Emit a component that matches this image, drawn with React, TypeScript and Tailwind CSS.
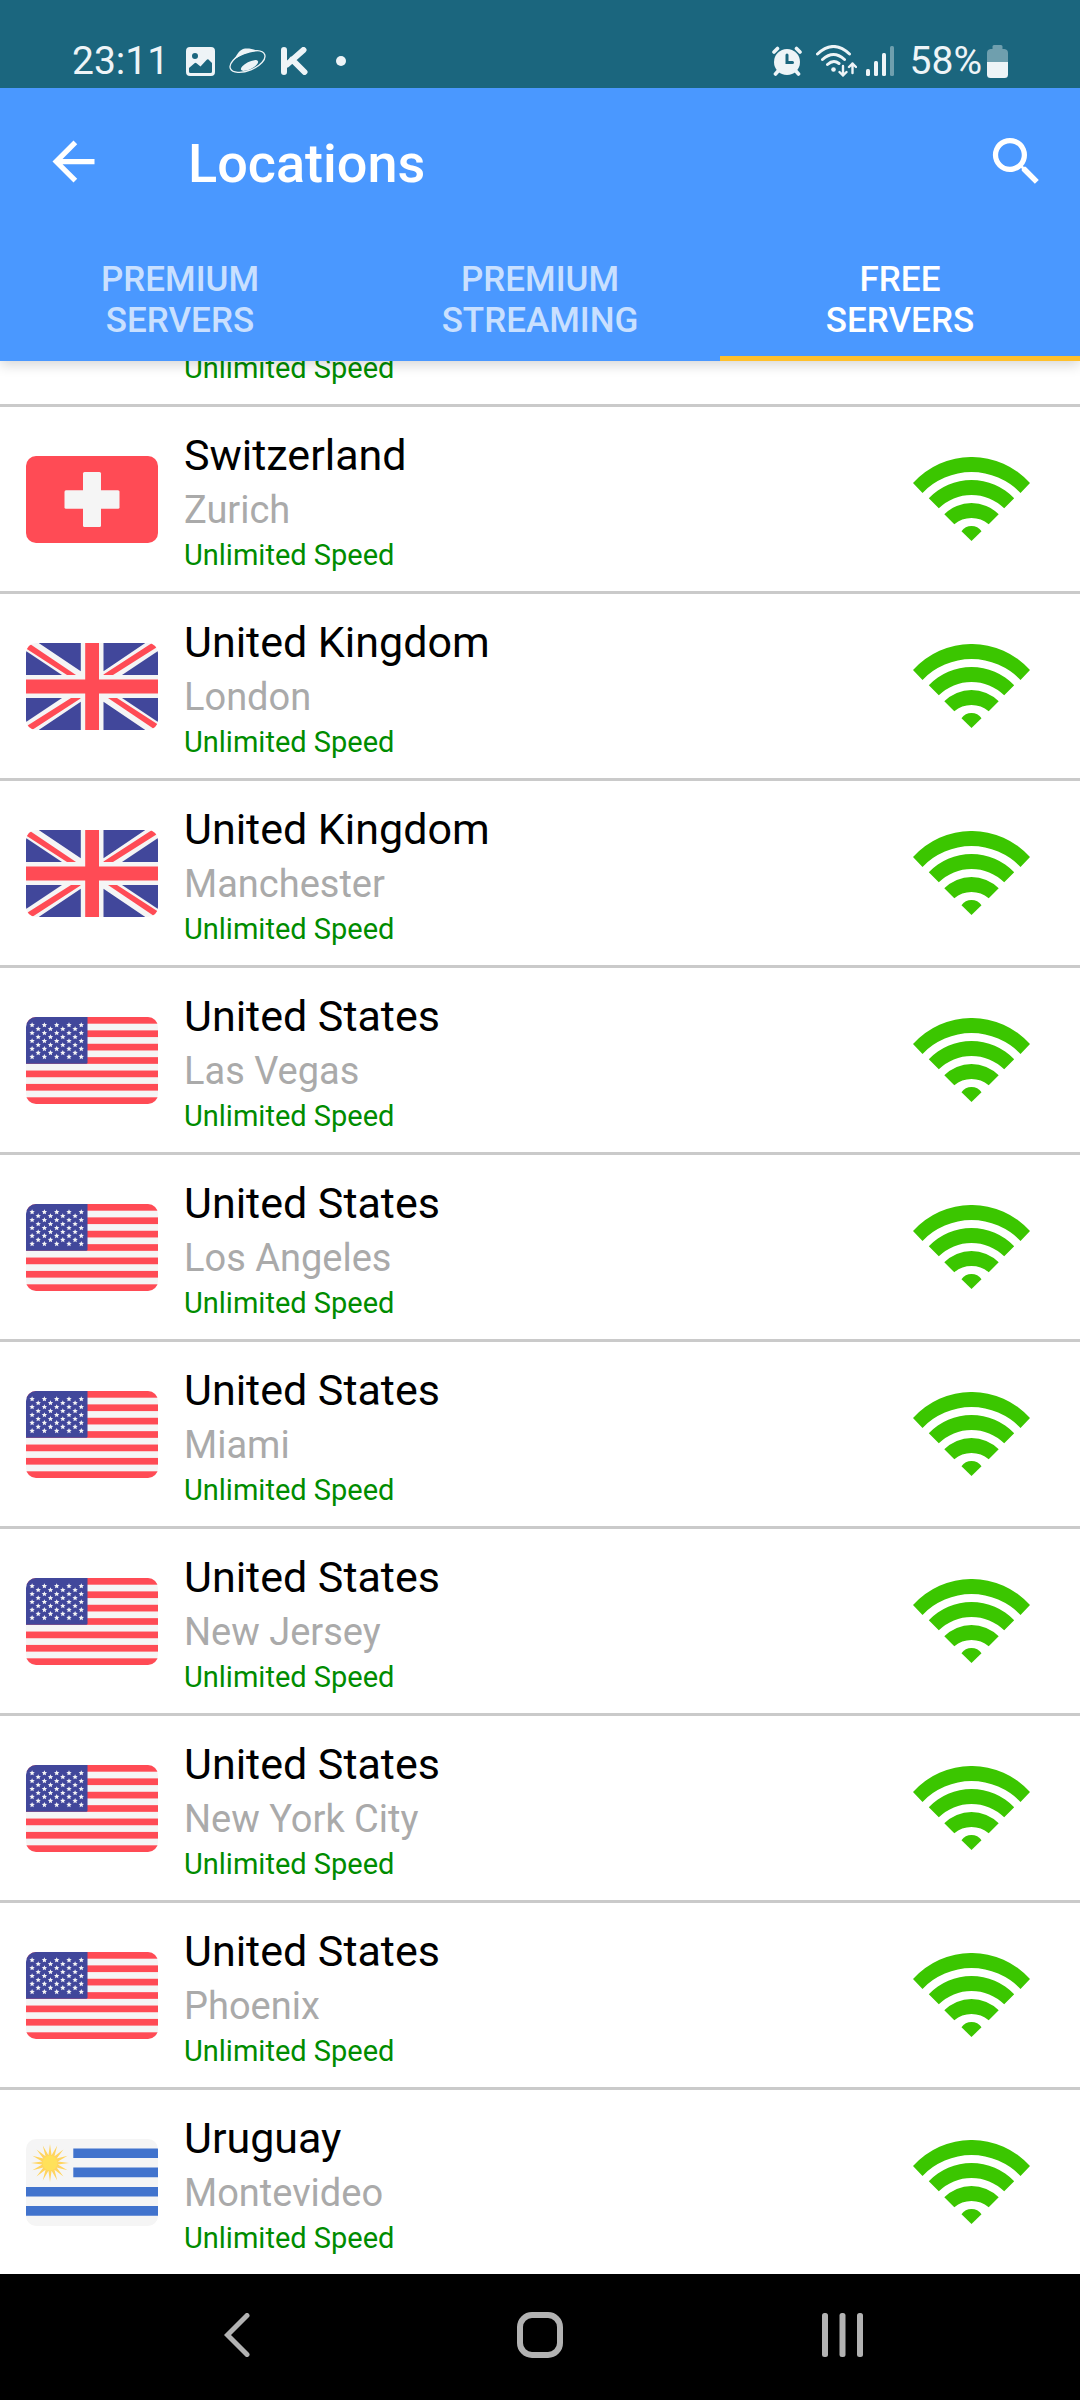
import React from "react";

type Country = "ch" | "gb" | "us" | "uy";

const servers: { country: Country; name: string; city: string }[] = [
  { country: "ch", name: "Switzerland", city: "Zurich" },
  { country: "gb", name: "United Kingdom", city: "London" },
  { country: "gb", name: "United Kingdom", city: "Manchester" },
  { country: "us", name: "United States", city: "Las Vegas" },
  { country: "us", name: "United States", city: "Los Angeles" },
  { country: "us", name: "United States", city: "Miami" },
  { country: "us", name: "United States", city: "New Jersey" },
  { country: "us", name: "United States", city: "New York City" },
  { country: "us", name: "United States", city: "Phoenix" },
  { country: "uy", name: "Uruguay", city: "Montevideo" },
];

const tabs = [
  { lines: ["PREMIUM", "SERVERS"], active: false },
  { lines: ["PREMIUM", "STREAMING"], active: false },
  { lines: ["FREE", "SERVERS"], active: true },
];

function starPoints(cx: number, cy: number, spikes: number, outer: number, inner: number) {
  return Array.from({ length: spikes * 2 }, (_, i) => {
    const r = i % 2 === 0 ? outer : inner;
    const a = (Math.PI * i) / spikes - Math.PI / 2;
    return `${(cx + r * Math.cos(a)).toFixed(2)},${(cy + r * Math.sin(a)).toFixed(2)}`;
  }).join(" ");
}

function SwissFlag() {
  return (
    <>
      <rect width="132" height="87" fill="#ff4b55" />
      <rect x="57" y="16" width="18" height="55" rx="1.5" fill="#f5f5f5" />
      <rect x="38.5" y="34.3" width="55" height="18.4" rx="1.5" fill="#f5f5f5" />
    </>
  );
}

function BritishFlag() {
  return (
    <>
      <rect width="132" height="87" fill="#f5f5f5" />
      <path
        fill="#41479b"
        d="M12.7 0H54.8V28.3ZM0 8L36 32H0ZM77.5 0H119.3L77.5 28.3ZM132 8V32H96ZM0 55H36L0 79ZM54.8 58.7V87H12.7ZM77.5 58.7L119.3 87H77.5ZM96 55H132V79Z"
      />
      <path
        fill="#ff4b55"
        d="M2.5 0L50 32H41L0 5.5V2ZM77.5 32H87L132 3.5V2L126 0L77.5 31.5ZM54.5 55H45L0 83.5V85L6 87L54.5 55.5ZM129.5 87L82 55H91L132 81.5V85Z"
      />
      <path fill="#ff4b55" d="M59.2 0H73V36.5H132V50.5H73V87H59.2V50.5H0V36.5H59.2Z" />
    </>
  );
}

function AmericanFlag() {
  const stripe = 87 / 13;
  const stars: [number, number][] = [];
  for (let row = 0; row < 9; row++) {
    const count = row % 2 === 0 ? 5 : 4;
    for (let col = 0; col < count; col++) {
      stars.push([(row % 2 === 0 ? 6.1 : 12.2) + col * 12.3, 8.1 + row * 3.97]);
    }
  }
  return (
    <>
      <rect width="132" height="87" fill="#f5f5f5" />
      {Array.from({ length: 7 }, (_, i) => (
        <rect key={i} y={i * 2 * stripe} width="132" height={stripe} fill="#ff4b55" />
      ))}
      <path d="M0 0H61.5V45.5Q61.5 46.8 60.2 46.8H0Z" fill="#41479b" />
      {stars.map(([x, y]) => (
        <polygon key={`${x}-${y}`} points={starPoints(x, y, 5, 2.8, 1.3)} fill="#f5f5f5" />
      ))}
    </>
  );
}

function UruguayanFlag() {
  return (
    <>
      <rect width="132" height="87" fill="#f5f5f5" />
      <path fill="#4173cd" d="M47.3 9.4H132V19H47.3ZM47.3 28.6H132V38.2H47.3ZM0 47.9H132V57.5H0ZM0 67.1H132V76.7H0Z" />
      <polygon points={starPoints(24, 24, 16, 19, 8)} fill="#ffd45f" />
      <circle cx="24" cy="24" r="7.5" fill="#ffe15a" />
    </>
  );
}

function Flag({ country }: { country: Country }) {
  return (
    <svg viewBox="0 0 132 87" className="h-[87px] w-[132px] shrink-0 rounded-[10px]" aria-hidden="true">
      {country === "ch" && <SwissFlag />}
      {country === "gb" && <BritishFlag />}
      {country === "us" && <AmericanFlag />}
      {country === "uy" && <UruguayanFlag />}
    </svg>
  );
}

function SignalIcon() {
  return (
    <svg viewBox="0 0 117 84" className="h-[84px] w-[117px] shrink-0" fill="#3bc600" role="img" aria-label="Strong signal">
      <path d="M0 26A78.8 78.8 0 0 1 117 26L107.5 36A67.7 67.7 0 0 0 9.5 36Z" />
      <path d="M15.8 41.3A59 59 0 0 1 101.2 41.3L91.2 51.3A46.8 46.8 0 0 0 25.8 51.3Z" />
      <path d="M31.3 57.3A38.4 38.4 0 0 1 85.7 57.3L75.7 67.3A26.7 26.7 0 0 0 41.3 67.3Z" />
      <path d="M48.5 74.3A12 12 0 0 1 68.5 74.3L58.5 84Z" />
    </svg>
  );
}

function StatusBar() {
  return (
    <div className="flex h-[88px] items-end justify-between bg-[#1b667e] pr-[72px] pb-1 pl-[72px] text-[39px] leading-[46px] text-[#eef4f7]">
      <div className="flex items-center">
        <span>23:11</span>
        <svg viewBox="0 0 29 29" className="ml-[17px] size-[29px]" aria-hidden="true">
          <path
            fill="currentColor"
            fillRule="evenodd"
            d="M4 0H25Q29 0 29 4V25Q29 29 25 29H4Q0 29 0 25V4Q0 0 4 0ZM9 6A3 3 0 1 0 9 12A3 3 0 1 0 9 6ZM3 21V24.500Q3 26 4.500 26H24.500Q26 26 26 24.500V16L22.500 12.500Q21.500 12 20.500 13L14.500 19.500L10.500 16.200Q9.500 15.500 8.500 16.200Z"
          />
        </svg>
        <svg viewBox="0 0 37 26" className="ml-[14px] h-[26px] w-[37px]" aria-hidden="true">
          <path fill="currentColor" d="M4 12C8 8 9 3 14 1C19 0 24 1 29 3C20 4 12 7 4 12Z" />
          <ellipse cx="18.500" cy="13.500" rx="18.500" ry="9" transform="rotate(-22 18.500 13.500)" fill="none" stroke="currentColor" strokeWidth="1.300" />
          <ellipse cx="20.500" cy="17.500" rx="9.500" ry="3.600" transform="rotate(-27 20.500 17.500)" fill="currentColor" />
        </svg>
        <svg viewBox="0 0 27 28" className="ml-[15px] h-[28px] w-[27px]" fill="none" stroke="currentColor" strokeWidth="6" strokeLinecap="round" aria-hidden="true">
          <path d="M3 3V25M22.500 3L6 17.500M11 12.500L23.500 25" />
        </svg>
        <span className="ml-[28px] size-[10px] rounded-full bg-[#eef4f7]" />
      </div>
      <div className="flex items-center">
        <svg viewBox="0 0 30 30" className="size-[30px]" aria-hidden="true">
          <circle cx="15" cy="16" r="13" fill="currentColor" />
          <path d="M2 6L5.500 2.500M28 6L24.500 2.500M3.500 28L7 24M26.500 28L23 24" stroke="currentColor" strokeWidth="3.600" strokeLinecap="round" />
          <path d="M15 9V16.500H20.500" fill="none" stroke="#1b667e" strokeWidth="3" strokeLinecap="round" />
        </svg>
        <svg viewBox="0 0 41 32" className="ml-[14px] h-[32px] w-[41px]" fill="none" stroke="currentColor" strokeWidth="3" strokeLinecap="round" strokeLinejoin="round" aria-hidden="true">
          <path d="M1.500 9Q17.500 -6 33.500 9M6.500 14.500Q17.500 4.500 28.500 14.500M11.500 19.500Q17.500 14 23 18.500" />
          <circle cx="17.500" cy="24.500" r="2.300" fill="currentColor" stroke="none" />
          <path d="M27 21V30.500M23.500 27L27 30.500L30.500 27M36.500 28V18.500M33 22L36.500 18.500L40 22" strokeWidth="2.400" />
        </svg>
        <svg viewBox="0 0 28 30" className="ml-[9px] h-[30px] w-[28px]" fill="currentColor" aria-hidden="true">
          <rect y="23" width="4" height="7" rx="1.500" />
          <rect x="8" y="15" width="4" height="15" rx="1.500" />
          <rect x="16" y="7" width="4" height="23" rx="1.500" />
          <rect x="24" width="4" height="30" rx="1.500" opacity="0.4" />
        </svg>
        <span className="ml-[16px]">58%</span>
        <svg viewBox="0 0 21 33" className="ml-[5px] h-[33px] w-[21px]" fill="currentColor" aria-hidden="true">
          <path opacity="0.4" d="M7 0H14Q15.500 0 15.500 1.500V4H17.500Q21 4.500 21 8V17H0V8Q0 4.500 3.500 4H5.500V1.500Q5.500 0 7 0Z" />
          <path d="M0 17H21V29.500Q21 33 17.500 33H3.500Q0 33 0 29.500Z" />
        </svg>
      </div>
    </div>
  );
}

function Header() {
  return (
    <header className="relative z-10 bg-[#4a98ff] text-white shadow-[0_4px_12px_rgba(0,0,0,0.16)]">
      <StatusBar />
      <div className="flex h-[147px] items-center pr-8 pl-[42px]">
        <button type="button" aria-label="Back" className="size-[63px]">
          <svg viewBox="0 0 24 24" fill="currentColor" className="size-full">
            <path d="M20 11H7.830l5.590-5.590L12 4l-8 8 8 8 1.410-1.410L7.830 13H20v-2z" />
          </svg>
        </button>
        <h1 className="ml-[83px] flex-1 pt-1 text-[54px] leading-[62px] font-medium">Locations</h1>
        <button type="button" aria-label="Search" className="size-[63px]">
          <svg viewBox="0 0 24 24" fill="currentColor" className="size-full">
            <path d="M15.500 14h-.790l-.280-.270A6.471 6.471 0 0 0 16 9.500 6.500 6.500 0 1 0 9.500 16c1.610 0 3.090-.590 4.230-1.570l.270.280v.790l5 4.990L20.490 19l-4.990-5zm-6 0C7.010 14 5 11.990 5 9.500S7.010 5 9.500 5 14 7.010 14 9.500 11.990 14 9.500 14z" />
          </svg>
        </button>
      </div>
      <div role="tablist" className="grid h-[126px] grid-cols-3">
        {tabs.map((tab) => (
          <button
            key={tab.lines.join(" ")}
            type="button"
            role="tab"
            aria-selected={tab.active}
            className={
              tab.active
                ? "flex flex-col items-center border-b-5 border-[#ffc02b] pt-6 text-[35px] leading-[41px] font-medium text-white"
                : "flex flex-col items-center pt-6 text-[35px] leading-[41px] font-medium text-[#c9e0ff]"
            }
          >
            {tab.lines.map((line) => (
              <span key={line}>{line}</span>
            ))}
          </button>
        ))}
      </div>
    </header>
  );
}

function Speed() {
  return <span className="text-[29px] leading-[34px] text-[#008c00]">Unlimited Speed</span>;
}

export default function App() {
  return (
    <div className="flex min-h-screen flex-col bg-white font-['Roboto',sans-serif] text-black">
      <Header />
      <main className="flex-1">
        <ul>
          <li className="flex h-[46px] flex-col justify-end overflow-hidden border-b-3 border-[#cacaca] pb-[19px] pl-[184px]">
            <Speed />
          </li>
          {servers.map((server) => (
            <li key={server.name + server.city} className="border-b-3 border-[#cacaca] last:border-b-0">
              <button type="button" className="flex w-full items-center pr-[50px] pl-[26px] text-left">
                <Flag country={server.country} />
                <span className="ml-[26px] flex flex-1 flex-col pt-[23px] pb-[19px]">
                  <span className="text-[43px] leading-[50px]">{server.name}</span>
                  <span className="mt-2 text-[38px] leading-[44px] text-[#aaaaaa]">{server.city}</span>
                  <span className="mt-[6px] flex">
                    <Speed />
                  </span>
                </span>
                <SignalIcon />
              </button>
            </li>
          ))}
        </ul>
      </main>
      <nav className="grid h-[126px] grid-cols-3 bg-black px-[86px] pb-[5px] text-[#b2b2b2]">
        <button type="button" aria-label="Back" className="flex items-center justify-center">
          <svg viewBox="0 0 26 44" className="h-[44px] w-[26px]" fill="none" stroke="currentColor" strokeWidth="5" strokeLinecap="round">
            <path d="M23 2.500L3.500 22L23 41.500" />
          </svg>
        </button>
        <button type="button" aria-label="Home" className="flex items-center justify-center">
          <span className="size-[46px] rounded-[15px] border-[6px] border-[#b2b2b2]" />
        </button>
        <button type="button" aria-label="Recent apps" className="flex items-center justify-center">
          <svg viewBox="0 0 41 44" className="h-[44px] w-[41px]" fill="currentColor">
            <rect width="6" height="44" rx="2.500" />
            <rect x="17.500" width="6" height="44" rx="2.500" />
            <rect x="35" width="6" height="44" rx="2.500" />
          </svg>
        </button>
      </nav>
    </div>
  );
}
